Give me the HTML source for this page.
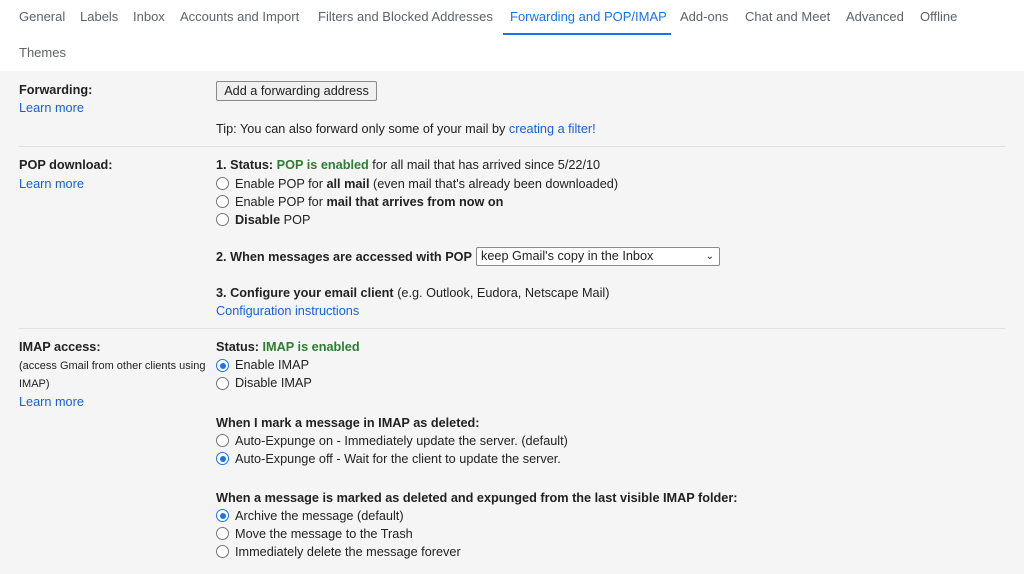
<!DOCTYPE html>
<html><head><style>
body{margin:0;width:1024px;height:574px;overflow:hidden;background:#f5f5f5;font-family:"Liberation Sans",sans-serif;font-size:12.7px;color:#222;position:relative}
.t{position:absolute;white-space:nowrap;line-height:18px}
.hdr{position:absolute;left:0;top:0;width:1024px;height:71px;background:#fff}
.tab{position:absolute;top:9px;color:#5f6368;font-size:13px}
b{font-weight:bold}
.g{color:#2e7d32;font-weight:bold}
a,.l{color:#1a5fd9;text-decoration:none}
.sep{position:absolute;left:19px;width:986px;height:1px;background:#e2e2e2}
.r{position:absolute;left:216px;width:11px;height:11px;border:1px solid #767676;border-radius:50%;background:#fff}
.r.on{border-color:#1a73e8}
.r.on::after{content:"";position:absolute;left:2.5px;top:2.5px;width:6px;height:6px;border-radius:50%;background:#1a73e8}
</style></head><body>
<div class="hdr"></div>
<div class="tab" style="left:19px">General</div>
<div class="tab" style="left:80px">Labels</div>
<div class="tab" style="left:133px">Inbox</div>
<div class="tab" style="left:180px">Accounts and Import</div>
<div class="tab" style="left:318px">Filters and Blocked Addresses</div>
<div class="tab" style="left:510px;color:#1a73e8">Forwarding and POP/IMAP</div>
<div style="position:absolute;left:503px;top:33px;width:168px;height:2px;background:#1a73e8"></div>
<div class="tab" style="left:680px">Add-ons</div>
<div class="tab" style="left:745px">Chat and Meet</div>
<div class="tab" style="left:846px">Advanced</div>
<div class="tab" style="left:920px">Offline</div>
<div class="tab" style="left:19px;top:45px">Themes</div>

<div class="t" style="left:19px;top:81px"><b>Forwarding:</b></div>
<div class="t l" style="left:19px;top:99px">Learn more</div>
<div style="position:absolute;left:216px;top:81px;width:161px;height:20px;border:1px solid #8a8a8a;border-radius:2px;background:#f0f0f0;box-sizing:border-box;line-height:18px;text-align:center">Add a forwarding address</div>
<div class="t" style="left:216px;top:120px">Tip: You can also forward only some of your mail by <span class="l">creating a filter!</span></div>
<div class="sep" style="top:146px"></div>

<div class="t" style="left:19px;top:156px"><b>POP download:</b></div>
<div class="t l" style="left:19px;top:175px">Learn more</div>
<div class="t" style="left:216px;top:156px"><b>1. Status:</b> <span class="g">POP is enabled</span> for all mail that has arrived since 5/22/10</div>
<div class="r" style="top:177px"></div><div class="t" style="left:235px;top:175px">Enable POP for <b>all mail</b> (even mail that's already been downloaded)</div>
<div class="r" style="top:195px"></div><div class="t" style="left:235px;top:193px">Enable POP for <b>mail that arrives from now on</b></div>
<div class="r" style="top:213px"></div><div class="t" style="left:235px;top:211px"><b>Disable</b> POP</div>
<div class="t" style="left:216px;top:248px"><b>2. When messages are accessed with POP</b></div>
<div style="position:absolute;left:476px;top:247px;width:244px;height:19px;border:1px solid #8a8a8a;border-radius:2px;background:#fff;box-sizing:border-box;line-height:17px;padding-left:4px">keep Gmail's copy in the Inbox<span style="position:absolute;right:5px;top:0;font-size:10px">&#8964;</span></div>
<div class="t" style="left:216px;top:284px"><b>3. Configure your email client</b> (e.g. Outlook, Eudora, Netscape Mail)</div>
<div class="t l" style="left:216px;top:302px">Configuration instructions</div>
<div class="sep" style="top:328px"></div>

<div class="t" style="left:19px;top:338px"><b>IMAP access:</b></div>
<div class="t" style="left:19px;top:357px;font-size:11px">(access Gmail from other clients using</div>
<div class="t" style="left:19px;top:375px;font-size:11px">IMAP)</div>
<div class="t l" style="left:19px;top:393px">Learn more</div>
<div class="t" style="left:216px;top:338px"><b>Status:</b> <span class="g">IMAP is enabled</span></div>
<div class="r on" style="top:359px"></div><div class="t" style="left:235px;top:356px">Enable IMAP</div>
<div class="r" style="top:377px"></div><div class="t" style="left:235px;top:374px">Disable IMAP</div>
<div class="t" style="left:216px;top:414px"><b>When I mark a message in IMAP as deleted:</b></div>
<div class="r" style="top:434px"></div><div class="t" style="left:235px;top:432px">Auto-Expunge on - Immediately update the server. (default)</div>
<div class="r on" style="top:452px"></div><div class="t" style="left:235px;top:450px">Auto-Expunge off - Wait for the client to update the server.</div>
<div class="t" style="left:216px;top:489px"><b>When a message is marked as deleted and expunged from the last visible IMAP folder:</b></div>
<div class="r on" style="top:509px"></div><div class="t" style="left:235px;top:507px">Archive the message (default)</div>
<div class="r" style="top:527px"></div><div class="t" style="left:235px;top:525px">Move the message to the Trash</div>
<div class="r" style="top:545px"></div><div class="t" style="left:235px;top:543px">Immediately delete the message forever</div>
</body></html>
